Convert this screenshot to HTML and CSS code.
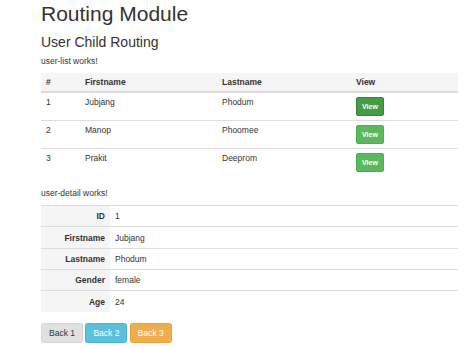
FILE: index.html
```html
<!DOCTYPE html>
<html lang="en">
<head>
    <meta charset="UTF-8">
    <meta name="viewport" content="width=device-width, initial-scale=1.0">
    <title>Routing Module</title>
    <link rel="stylesheet" href="styles.css">
</head>
<body>

<div class="container">
    <h1>Routing Module</h1>
    <h3>User Child Routing</h3>

    <p>user-list works!</p>
    <table class="table user-list">
        <thead>
            <tr>
                <th class="col-id">#</th>
                <th class="col-first">Firstname</th>
                <th class="col-last">Lastname</th>
                <th>View</th>
            </tr>
        </thead>
        <tbody>
            <tr>
                <td>1</td>
                <td>Jubjang</td>
                <td>Phodum</td>
                <td><button class="btn btn-success active">View</button></td>
            </tr>
            <tr>
                <td>2</td>
                <td>Manop</td>
                <td>Phoomee</td>
                <td><button class="btn btn-success">View</button></td>
            </tr>
            <tr>
                <td>3</td>
                <td>Prakit</td>
                <td>Deeprom</td>
                <td><button class="btn btn-success">View</button></td>
            </tr>
        </tbody>
    </table>

    <p>user-detail works!</p>
    <table class="table user-detail">
        <tbody>
            <tr><th>ID</th><td>1</td></tr>
            <tr><th>Firstname</th><td>Jubjang</td></tr>
            <tr><th>Lastname</th><td>Phodum</td></tr>
            <tr><th>Gender</th><td>female</td></tr>
            <tr><th>Age</th><td>24</td></tr>
        </tbody>
    </table>

    <div class="back-buttons">
        <button class="back-btn back-default">Back 1</button>
        <button class="back-btn back-info">Back 2</button>
        <button class="back-btn back-warning">Back 3</button>
    </div>
</div>

</body>
</html>
```

FILE: styles.css
```css
body {
    font-family: "Liberation Sans", Arial, sans-serif;
    font-size: 8.5px;
    line-height: 12px;
    color: #333;
    background-color: #fff;
    margin: 0;
    padding: 0;
}
.container {
    width: 417px;
    padding-left: 41px;
}
h1 {
    font-size: 21px;
    font-weight: 500;
    line-height: 1.1;
    margin: 2px 0 0;
}
h3 {
    font-size: 14px;
    font-weight: 500;
    line-height: 1.1;
    margin: 9.5px 0 5px;
}
p {
    margin: 0 0 6px;
}
.table {
    width: 100%;
    border-collapse: collapse;
    border-spacing: 0;
    margin-bottom: 11px;
}
.table th {
    text-align: left;
    font-weight: bold;
}
.table td, .table th {
    padding: 4.2px 5px;
    border-top: 1px solid #ddd;
    vertical-align: top;
}
.user-list thead th {
    padding: 3px 5px;
    background-color: #f5f5f5;
    border-top: 0;
    border-bottom: 2px solid #ddd;
}
.user-list td {
    padding: 4px 5px;
    line-height: 11px;
}
.col-id {
    width: 29px;
}
.col-first {
    width: 127px;
}
.col-last {
    width: 124px;
}
.btn {
    display: block;
    font-family: inherit;
    font-size: 7px;
    font-weight: bold;
    line-height: 11px;
    padding: 3px 5px;
    border: 1px solid #4cae4c;
    border-radius: 2px;
    background-color: #5cb85c;
    color: #fff;
    cursor: pointer;
}
.btn.active {
    background-color: #449d44;
    border-color: #398439;
}
.user-detail th {
    width: 59px;
    text-align: right;
    background-color: #f5f5f5;
}
.back-buttons {
    display: flex;
    gap: 2.4px;
}
.back-btn {
    font-family: inherit;
    font-size: 8.5px;
    line-height: 12px;
    padding: 3px 7px;
    border: 1px solid #d4d4d4;
    border-radius: 2.4px;
    cursor: pointer;
}
.back-default {
    background-color: #e0e0e0;
    color: #333;
}
.back-info {
    background-color: #5bc0de;
    border-color: #46b8da;
    color: #fff;
}
.back-warning {
    background-color: #f0ad4e;
    border-color: #eea236;
    color: #fff;
}
```
